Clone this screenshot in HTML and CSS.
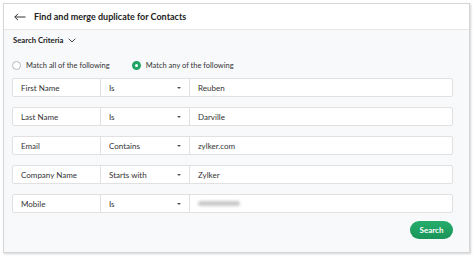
FILE: index.html
```html
<!DOCTYPE html>
<html lang="en">
<head>
    <meta charset="UTF-8">
    <meta name="viewport" content="width=device-width, initial-scale=1.0">
    <link rel="stylesheet" href="styles.css">
    <title>Find and merge duplicate</title>
</head>
<body>
    <div class="card">
        <div class="header">
            <svg class="back" width="12" height="8" viewBox="0 0 12 8">
                <path d="M4 0.8 L0.8 4 L4 7.2 M0.8 4 H11.5" fill="none" stroke="#333" stroke-width="1"/>
            </svg>
            <span class="title">Find and merge duplicate for Contacts</span>
        </div>
        <div class="content">
            <div class="criteria">
                Search Criteria
                <svg class="chevron" width="8" height="5" viewBox="0 0 8 5">
                    <path d="M0.7 0.7 L4 4 L7.3 0.7" fill="none" stroke="#444" stroke-width="1"/>
                </svg>
            </div>
            <div class="radios">
                <label class="radio"><span class="dot"></span>Match all of the following</label>
                <label class="radio"><span class="dot checked"></span>Match any of the following</label>
            </div>

            <div class="row">
                <div class="cell field">First Name</div>
                <div class="cell op">Is <span class="caret"></span></div>
                <div class="cell value">Reuben</div>
            </div>
            <div class="row">
                <div class="cell field">Last Name</div>
                <div class="cell op">Is <span class="caret"></span></div>
                <div class="cell value">Darville</div>
            </div>
            <div class="row">
                <div class="cell field">Email</div>
                <div class="cell op">Contains <span class="caret"></span></div>
                <div class="cell value">zylker.com</div>
            </div>
            <div class="row">
                <div class="cell field">Company Name</div>
                <div class="cell op">Starts with <span class="caret"></span></div>
                <div class="cell value">Zylker</div>
            </div>
            <div class="row">
                <div class="cell field">Mobile</div>
                <div class="cell op">Is <span class="caret"></span></div>
                <div class="cell value"><span class="blurred"></span></div>
            </div>

            <div class="actions">
                <button class="search-btn">Search</button>
            </div>
        </div>
    </div>
</body>
</html>
```

FILE: styles.css
```css
body {
    margin: 0;
    padding: 3px;
    background-color: #ffffff;
    font-family: 'Lato', 'Liberation Sans', sans-serif;
    color: #333333;
}
.card {
    width: 465px;
    height: 248px;
    border: 1px solid #d6d6d6;
    box-shadow: 1px 1px 2px rgba(0, 0, 0, 0.18);
    background-color: #f8f9fb;
    overflow: hidden;
}
.header {
    height: 25px;
    background-color: #ffffff;
    border-bottom: 1px solid #e6e6e6;
    display: flex;
    align-items: center;
    padding-left: 10px;
}
.back {
    margin-right: 8px;
    margin-top: 1px;
}
.title {
    font-size: 9px;
    font-weight: bold;
    color: #222222;
}
.content {
    padding: 4px 16px 0 8px;
}
.criteria {
    font-size: 7.7px;
    font-weight: bold;
    height: 12px;
    line-height: 12px;
    margin-left: 1px;
    display: flex;
    align-items: center;
    color: #222222;
}
.chevron {
    margin-left: 5px;
}
.radios {
    display: flex;
    margin-top: 13px;
    height: 12px;
    align-items: center;
}
.radio {
    font-size: 7.5px;
    display: flex;
    align-items: center;
    color: #333333;
    margin-right: 22px;
}
.dot {
    width: 7px;
    height: 7px;
    border: 1px solid #b8b8b8;
    border-radius: 50%;
    background-color: #ffffff;
    margin-right: 5px;
    box-sizing: content-box;
}
.dot.checked {
    width: 3px;
    height: 3px;
    border: 3px solid #20a464;
}
.row {
    display: flex;
    height: 17px;
    margin-top: 10px;
    background-color: #ffffff;
    border: 1px solid #e1e1e1;
    border-radius: 2px;
    font-size: 8px;
}
.radios + .row {
    margin-top: 7px;
}
.cell {
    display: flex;
    align-items: center;
    padding-left: 8px;
    box-sizing: border-box;
}
.field {
    width: 88px;
    border-right: 1px solid #e1e1e1;
}
.op {
    width: 89px;
    border-right: 1px solid #e1e1e1;
    position: relative;
}
.caret {
    position: absolute;
    right: 8px;
    top: 8px;
    border-left: 2px solid transparent;
    border-right: 2px solid transparent;
    border-top: 2px solid #555555;
}
.value {
    flex: 1;
}
.blurred {
    display: block;
    width: 42px;
    height: 5px;
    background-color: #c9c9c9;
    border-radius: 3px;
    filter: blur(1.5px);
}
.actions {
    display: flex;
    justify-content: flex-end;
    margin-top: 8px;
}
.search-btn {
    width: 43px;
    height: 18px;
    border: none;
    border-radius: 9px;
    background-color: #1f9e60;
    background-image: linear-gradient(#25ad6b, #1a9459);
    color: #ffffff;
    font-family: 'Lato', 'Liberation Sans', sans-serif;
    font-size: 8px;
    font-weight: bold;
    padding: 0;
}
```
